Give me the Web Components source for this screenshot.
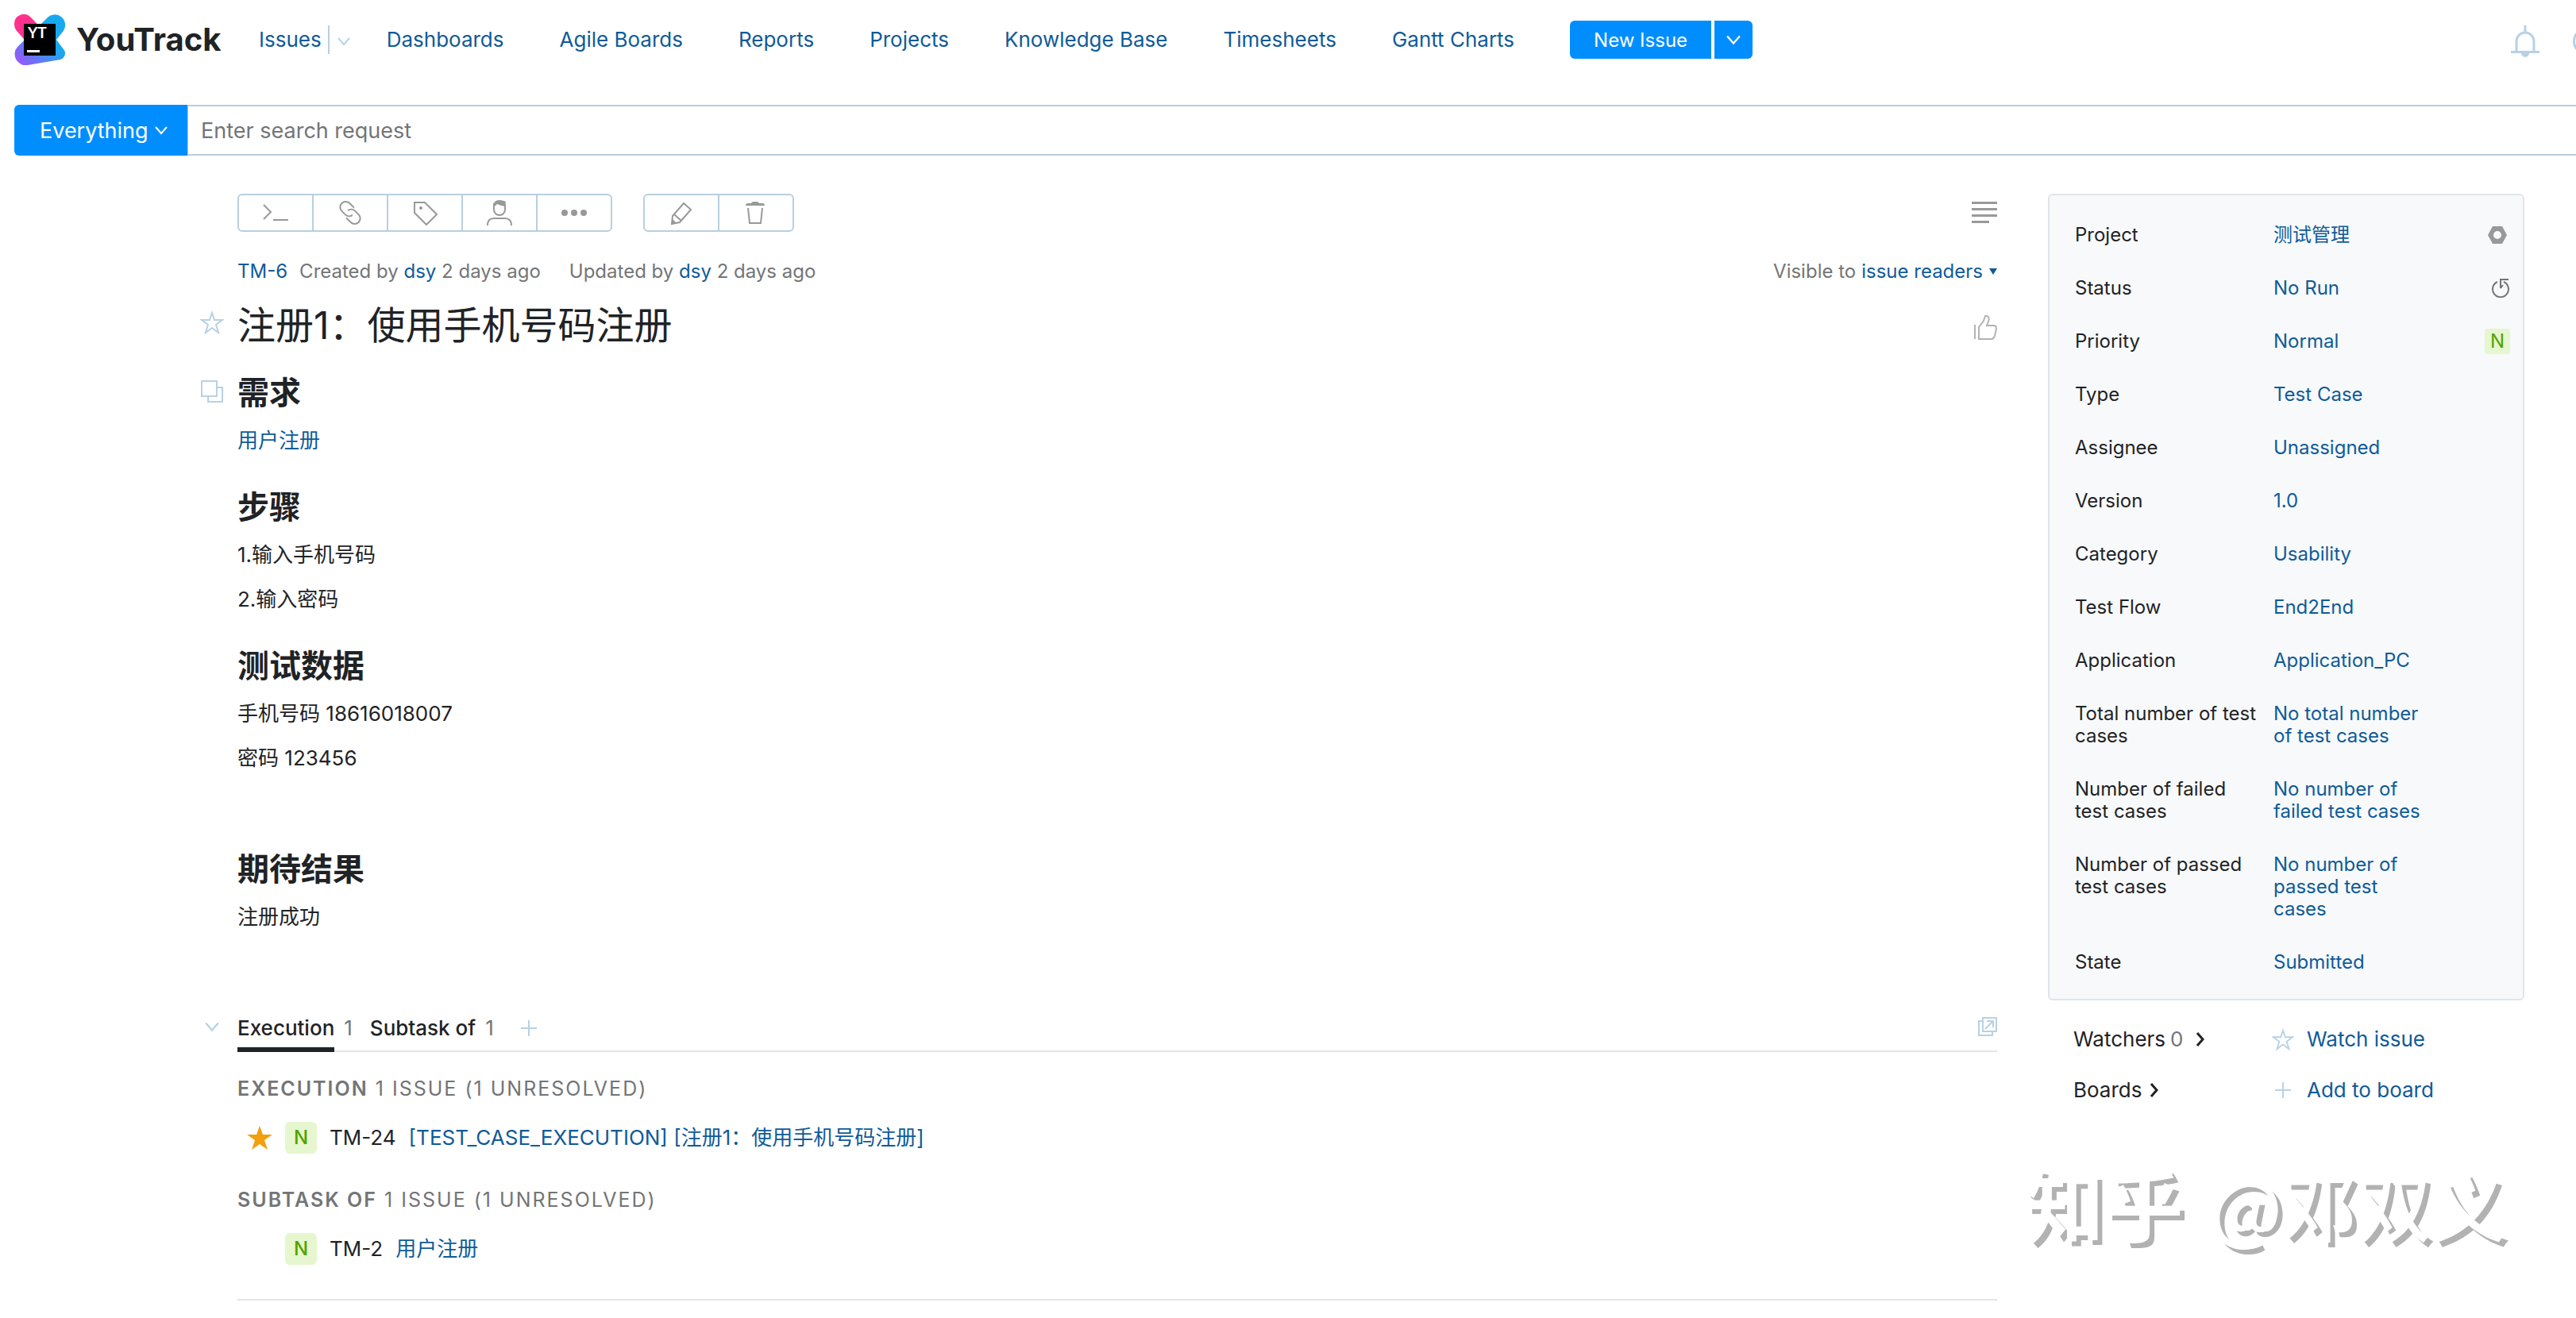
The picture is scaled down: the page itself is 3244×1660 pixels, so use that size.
<!DOCTYPE html>
<html lang="en">
<head>
<meta charset="utf-8">
<title>TM-6 注册1：使用手机号码注册</title>
<style>
  :root {
    --text: #1f2326;
    --secondary: #737577;
    --link: #0f5b99;
    --line: #b8cfdf;
    --border: #dfe5eb;
    --icon: #b8d1e5;
    --icon-grey: #999999;
    --main: #008eff;
    --panel: #f7f9fa;
  }

  html {
    overflow-x: hidden;
  }

  body {
    margin: 0;
    background: #ffffff;
    color: var(--text);
    font-family: Inter, "Noto Sans CJK SC", sans-serif;
    font-size: 26px;
    line-height: 40px;
  }
</style>
</head>
<body>

<yt-app>
  <yt-header slot="header"></yt-header>
  <yt-search slot="search"></yt-search>

  <yt-issue slot="issue">
    <span slot="summary">注册1：使用手机号码注册</span>
    <yt-description slot="description">
      <h2>需求</h2>
      <p><a href="#TM-2">用户注册</a></p>
      <h2>步骤</h2>
      <p>1.输入手机号码</p>
      <p>2.输入密码</p>
      <h2>测试数据</h2>
      <p>手机号码 18616018007</p>
      <p>密码 123456</p>
      <p>&nbsp;</p>
      <h2>期待结果</h2>
      <p>注册成功</p>
    </yt-description>
  </yt-issue>

  <yt-links slot="links">
    <yt-link-group name="Execution">
      <yt-issue-row issue-id="TM-24" starred>[TEST_CASE_EXECUTION] [注册1：使用手机号码注册]</yt-issue-row>
    </yt-link-group>
    <yt-link-group name="Subtask of">
      <yt-issue-row issue-id="TM-2">用户注册</yt-issue-row>
    </yt-link-group>
  </yt-links>

  <yt-sidebar slot="sidebar"></yt-sidebar>
</yt-app>

<yt-watermark><b>知乎</b> @邓双义</yt-watermark>

<script>
/* Icon shapes, keyed by name: [viewBox width, viewBox height, markup] */
const ICONS = {
  "chevron-down": [16, 12, '<path d="M1 2l7 8 7-8" fill="none" stroke="currentColor" stroke-width="2"/>'],
  "chevron-right": [12, 20, '<path d="M2 2l7 8-7 8" fill="none" stroke="currentColor" stroke-width="3"/>'],
  "caret": [10, 8, '<path d="M0 0h10l-5 8z" fill="currentColor"/>'],
  "bell": [36, 40, '<path d="M18 0v8M7 32V20a11 11 0 0 1 22 0v12" fill="none" stroke="currentColor" stroke-width="3"/><path d="M0 32h36v3H0z" fill="currentColor"/><path d="M13 35h10a5 5 0 0 1-10 0z" fill="currentColor"/>'],
  "command": [32, 32, '<path d="M1 6l9 9-9 9M13 25h19" fill="none" stroke="currentColor" stroke-width="2"/>'],
  "link": [32, 32, '<g transform="translate(16 16) rotate(45)" fill="none" stroke="currentColor" stroke-width="2"><path d="M-1-8h-8a7 7 0 0 0 0 14h6a7 7 0 0 0 7-6"/><path d="M1 8h8a7 7 0 0 0 0-14H3a7 7 0 0 0-7 6"/></g>'],
  "tag": [32, 32, '<path d="M3 3h13l15 15-13 13L3 16z" fill="none" stroke="currentColor" stroke-width="2"/><circle cx="11" cy="10" r="2" fill="currentColor"/>'],
  "user": [32, 32, '<g fill="none" stroke="currentColor" stroke-width="2"><path d="M9 4v8c0 4 3 7 7 7s7-3 7-7V5"/><path d="M1 32c0-6 3-9 8-9h14c5 0 8 3 8 9"/></g><path d="M8 8c0-5 3-8 8-8 3 0 6 1 8 2l-1 6c-5-1-8-2-10-3l-3 3z" fill="currentColor"/>'],
  "more": [32, 32, '<g fill="currentColor"><circle cx="4" cy="16" r="4"/><circle cx="16" cy="16" r="4"/><circle cx="28" cy="16" r="4"/></g>'],
  "pencil": [32, 32, '<path d="M5 20L19 4l9 8-14 16-10 2zM7 18l9 8" fill="none" stroke="currentColor" stroke-width="2"/><path d="M5 24l5 5-7 2z" fill="currentColor"/>'],
  "trash": [32, 32, '<path d="M6 10l2 19h14l2-19" fill="none" stroke="currentColor" stroke-width="2"/><path d="M3 7c0-2 1-3 3-3h4c1-2 2-2 5-2s4 0 5 2h4c2 0 3 1 3 3z" fill="currentColor"/>'],
  "text": [32, 28, '<path d="M0 0h32v3H0zM0 8h32v3H0zM0 16h32v3H0zM0 24h22v3H0z" fill="currentColor"/>'],
  "thumb": [30, 32, '<g fill="none" stroke="currentColor" stroke-width="2"><path d="M2 13v18"/><path d="M7 31V16l6-8 2-6c4-1 6 3 4 7l-2 5h9c2 0 3 2 3 4l-2 9c-1 3-2 4-4 4z"/></g>'],
  "star": [30, 30, '<path d="M15 3l3 9h10l-8 6 3 10-8-6-8 6 3-10-8-6h10z" fill="none" stroke="currentColor" stroke-width="2"/>'],
  "star-filled": [32, 30, '<path d="M16 0l4 11h12l-10 7 4 12-10-7-10 7 4-12L0 11h12z" fill="currentColor"/>'],
  "copy": [30, 30, '<path d="M2 2h19v19H2zM21 10h7v18H10v-7" fill="none" stroke="currentColor" stroke-width="2"/>'],
  "plus": [20, 20, '<path d="M10 0v20M0 10h20" fill="none" stroke="currentColor" stroke-width="2"/>'],
  "open": [24, 24, '<path d="M6 1h17v17H6zM6 5H1v18h17v-5M9 15l10-10M11 5h8v8" fill="none" stroke="currentColor" stroke-width="2"/>'],
  "hexagon": [24, 24, '<path fill-rule="evenodd" d="M6 1h12l6 11-6 11H6L0 12zM12 7a5 5 0 1 0 0 10 5 5 0 0 0 0-10z" fill="currentColor"/>'],
  "timer": [24, 24, '<path d="M8 4a10 10 0 1 0 8 0M12 12V1h10M12 12l3-4" fill="none" stroke="#737577" stroke-width="2"/>']
};

/* <yt-icon name="..." width="..">: inline SVG that takes the text colour */
class YtIcon extends HTMLElement {
  constructor() {
    super();
    this.attachShadow({ mode: "open" });
  }

  connectedCallback() {
    const [w, h, body] = ICONS[this.getAttribute("name")];
    const width = Number(this.getAttribute("width")) || w;
    this.shadowRoot.innerHTML = `
      <style>
        :host { display: inline-flex; flex: none; }
        svg { display: block; }
      </style>
      <svg width="${width}" height="${Math.round(width * h / w)}" viewBox="0 0 ${w} ${h}" aria-hidden="true">${body}</svg>
    `;
  }
}

/* Page frame: header and search on top, issue and sidebar side by side */
class YtApp extends HTMLElement {
  constructor() {
    super();
    this.attachShadow({ mode: "open" }).innerHTML = `
      <style>
        :host { display: block; }

        .page {
          display: grid;
          grid-template-columns: minmax(0, 1fr) 600px;
          column-gap: 64px;
          align-items: start;
          padding: 48px 65px 0 252px;
        }
      </style>
      <slot name="header"></slot>
      <slot name="search"></slot>
      <div class="page">
        <main>
          <slot name="issue"></slot>
          <slot name="links"></slot>
        </main>
        <slot name="sidebar"></slot>
      </div>
    `;
  }
}

class YtHeader extends HTMLElement {
  constructor() {
    super();
    this.attachShadow({ mode: "open" });
    this.links = ["Dashboards", "Agile Boards", "Reports", "Projects", "Knowledge Base", "Timesheets", "Gantt Charts"];
  }

  connectedCallback() {
    this.shadowRoot.innerHTML = `
      <style>
        :host { display: block; }

        header {
          display: flex;
          align-items: center;
          height: 100px;
          padding-left: 18px;
          overflow: hidden;
        }

        a { color: var(--link); text-decoration: none; }

        .logo {
          display: flex;
          align-items: center;
          gap: 14px;
          width: 308px;
          color: var(--text);
          font-size: 40px;
          font-weight: 700;
          flex: none;
        }

        nav {
          display: flex;
          align-items: center;
          gap: 70px;
          white-space: nowrap;
        }

        .issues {
          display: flex;
          align-items: center;
          margin-right: -24px;
        }

        .drop {
          display: flex;
          align-items: center;
          height: 36px;
          margin-left: 8px;
          padding: 4px 0 0 10px;
          background: none;
          border: 0;
          border-left: 2px solid var(--line);
          color: var(--icon);
        }

        .create {
          display: flex;
          gap: 4px;
        }

        .create button {
          display: flex;
          align-items: center;
          justify-content: center;
          height: 48px;
          padding: 0;
          border: 0;
          background: var(--main);
          color: #ffffff;
          font: 24px Inter, sans-serif;
        }

        .new { width: 178px; border-radius: 6px 0 0 6px; }
        .create .more { width: 48px; border-radius: 0 6px 6px 0; }

        .tools {
          display: flex;
          align-items: center;
          gap: 42px;
          margin-left: auto;
          margin-right: -30px;
          padding-top: 4px;
          color: var(--icon);
        }

        .tools button {
          display: flex;
          padding: 0;
          border: 0;
          background: none;
          color: inherit;
        }

        .tools .avatar {
          width: 34px;
          height: 34px;
          border: 3px solid var(--line);
          border-radius: 50%;
          box-sizing: border-box;
        }
      </style>
      <header>
        <a class="logo" href="#home">
          <svg width="64" height="64" viewBox="0 0 64 64" aria-hidden="true">
            <defs>
              <linearGradient id="body" x1="0" y1="1" x2="1" y2="0">
                <stop offset="0.1" stop-color="#905cfb"/>
                <stop offset="0.6" stop-color="#18a8ee"/>
              </linearGradient>
            </defs>
            <path d="M0 12A12 12 0 0 1 21 4L46 30 20 40 4 22A14 14 0 0 1 0 12z" fill="#ff318c"/>
            <path d="M41 5A13 13 0 0 1 61 22L53 32 62 44A8 8 0 0 1 58 57L17 64A14 14 0 0 1 4 41z" fill="url(#body)"/>
            <path d="M12 12h40v40H12z" fill="#000000"/>
            <text x="17" y="30" font-family="Lato, sans-serif" font-size="19" font-weight="700" fill="#ffffff">YT</text>
            <path d="M16 45h16v3H16z" fill="#ffffff"/>
          </svg>
          <span>YouTrack</span>
        </a>
        <nav aria-label="Main">
          <div class="issues">
            <a href="#issues">Issues</a>
            <button class="drop" aria-label="Saved searches"><yt-icon name="chevron-down"></yt-icon></button>
          </div>
          ${this.links.map(l => `<a href="#${l.toLowerCase().replace(" ", "-")}">${l}</a>`).join("")}
          <div class="create">
            <button class="new">New Issue</button>
            <button class="more" aria-label="More"><yt-icon name="chevron-down" width="18"></yt-icon></button>
          </div>
        </nav>
        <div class="tools">
          <button aria-label="Notifications"><yt-icon name="bell"></yt-icon></button>
          <button class="avatar" aria-label="Help"></button>
        </div>
      </header>
    `;
  }
}

class YtSearch extends HTMLElement {
  constructor() {
    super();
    this.attachShadow({ mode: "open" }).innerHTML = `
      <style>
        :host { display: block; padding: 32px 0 0 18px; }

        form {
          display: flex;
          height: 64px;
        }

        button {
          display: flex;
          align-items: center;
          gap: 8px;
          width: 218px;
          padding: 0 0 0 32px;
          border: 0;
          border-radius: 6px 0 0 6px;
          background: var(--main);
          color: #ffffff;
          font: 27px Inter, sans-serif;
          flex: none;
        }

        input {
          flex: 1;
          min-width: 0;
          padding: 0 16px;
          border: solid var(--line);
          border-width: 2px 0 2px 1px;
          color: var(--text);
          font: 27px Inter, sans-serif;
          outline: 0;
        }

        input::placeholder { color: var(--secondary); opacity: 1; }
      </style>
      <form role="search">
        <button type="button">Everything <yt-icon name="chevron-down"></yt-icon></button>
        <input type="text" placeholder="Enter search request" aria-label="Search">
      </form>
    `;
  }
}

/* Button strip of the issue; each group is one bordered box */
class YtToolbar extends HTMLElement {
  constructor() {
    super();
    this.attachShadow({ mode: "open" });
    this.groups = [
      [["command", "Command"], ["link", "Link"], ["tag", "Tag"], ["user", "Assign"], ["more", "More"]],
      [["pencil", "Edit"], ["trash", "Delete"]]
    ];
  }

  connectedCallback() {
    this.shadowRoot.innerHTML = `
      <style>
        :host {
          display: flex;
          align-items: center;
          gap: 39px;
        }

        .group {
          display: flex;
          border: 2px solid var(--line);
          border-radius: 6px;
        }

        button {
          display: flex;
          align-items: center;
          justify-content: center;
          width: 94px;
          height: 44px;
          padding: 0;
          border: 0;
          background: none;
          color: var(--icon-grey);
          box-sizing: border-box;
        }

        button:first-child { width: 92px; }
        button + button { border-left: 2px solid var(--line); }

        .plain { width: 32px; margin-left: auto; }
      </style>
      ${this.groups.map(g => `
        <div class="group">
          ${g.map(([icon, label]) => `<button aria-label="${label}"><yt-icon name="${icon}"></yt-icon></button>`).join("")}
        </div>
      `).join("")}
      <button class="plain" aria-label="Toggle view"><yt-icon name="text"></yt-icon></button>
    `;
  }
}

class YtIssue extends HTMLElement {
  constructor() {
    super();
    this.attachShadow({ mode: "open" }).innerHTML = `
      <style>
        :host { display: block; }

        yt-toolbar { margin-left: 47px; }

        a { color: var(--link); text-decoration: none; }

        .meta {
          display: flex;
          margin: 30px 0 0 47px;
          color: var(--secondary);
          font-size: 24px;
        }

        .meta .id { margin-right: 15px; }
        .meta .updated { margin-left: 36px; }

        .visible {
          display: flex;
          align-items: center;
          margin-left: auto;
        }

        .visible button {
          display: flex;
          align-items: center;
          gap: 8px;
          padding: 0 0 0 7px;
          border: 0;
          background: none;
          color: var(--link);
          font: inherit;
        }

        .row {
          display: grid;
          grid-template-columns: 47px minmax(0, 1fr) auto;
          align-items: start;
        }

        .tool {
          display: flex;
          align-items: center;
          height: 56px;
          padding: 0;
          border: 0;
          background: none;
          color: var(--icon);
        }

        .title { margin-top: 16px; }
        .title .like { height: 68px; color: #b2b2b2; }

        h1 {
          margin: 0;
          font-size: 48px;
          font-weight: 400;
          line-height: 64px;
        }

        .body { margin-top: 25px; }
        .body .tool { height: 44px; }
      </style>
      <yt-toolbar></yt-toolbar>
      <div class="meta">
        <a class="id" href="#TM-6">TM-6</a>
        <span>Created by <a href="#dsy">dsy</a> 2 days ago</span>
        <span class="updated">Updated by <a href="#dsy">dsy</a> 2 days ago</span>
        <span class="visible">Visible to <button>issue readers <yt-icon name="caret"></yt-icon></button></span>
      </div>
      <div class="row title">
        <button class="tool" aria-label="Star"><yt-icon name="star"></yt-icon></button>
        <h1><slot name="summary"></slot></h1>
        <button class="tool like" aria-label="Vote"><yt-icon name="thumb"></yt-icon></button>
      </div>
      <div class="row body">
        <button class="tool" aria-label="Copy"><yt-icon name="copy"></yt-icon></button>
        <slot name="description"></slot>
      </div>
    `;
  }
}

/* Rendered description; the texts come in through the slot */
class YtDescription extends HTMLElement {
  constructor() {
    super();
    this.attachShadow({ mode: "open" }).innerHTML = `
      <style>
        :host { display: block; }

        ::slotted(h2) {
          margin: 40px 0 16px;
          font-size: 40px;
          font-weight: 700;
          line-height: 48px;
        }

        ::slotted(h2:first-child) { margin-top: 0; }
        ::slotted(p) { margin: 16px 0 0; }
      </style>
      <slot></slot>
    `;
  }

  connectedCallback() {
    // ::slotted only reaches direct children, so nested links are coloured here
    this.querySelectorAll("a").forEach(a => {
      a.style.color = "var(--link)";
      a.style.textDecoration = "none";
    });
  }
}

class YtBadge extends HTMLElement {
  constructor() {
    super();
    this.attachShadow({ mode: "open" }).innerHTML = `
      <style>
        :host {
          display: inline-flex;
          align-items: center;
          justify-content: center;
          width: 32px;
          height: 32px;
          border-radius: 4px;
          background: #e6f6cf;
          color: #4da400;
          font-size: 24px;
          line-height: 32px;
          flex: none;
        }

        :host([large]) {
          width: 40px;
          height: 40px;
          border-radius: 6px;
          font-weight: 500;
        }
      </style>
      <slot></slot>
    `;
  }
}

class YtIssueRow extends HTMLElement {
  constructor() {
    super();
    this.attachShadow({ mode: "open" });
  }

  connectedCallback() {
    const id = this.getAttribute("issue-id");
    this.shadowRoot.innerHTML = `
      <style>
        :host {
          display: flex;
          align-items: center;
          padding-left: 12px;
        }

        .star {
          display: flex;
          width: 48px;
          padding: 0;
          border: 0;
          background: none;
          color: #f2a00e;
        }

        .id { margin: 0 16px; color: var(--text); text-decoration: none; }
        .summary { color: var(--link); text-decoration: none; }
      </style>
      <button class="star" aria-label="Star">${this.hasAttribute("starred") ? '<yt-icon name="star-filled"></yt-icon>' : ""}</button>
      <yt-badge large>N</yt-badge>
      <a class="id" href="#${id}">${id}</a>
      <a class="summary" href="#${id}"><slot></slot></a>
    `;
  }
}

class YtLinkGroup extends HTMLElement {
  constructor() {
    super();
    this.attachShadow({ mode: "open" });
  }

  connectedCallback() {
    this.shadowRoot.innerHTML = `
      <style>
        :host { display: block; }

        h3 {
          margin: 0 0 22px;
          color: var(--secondary);
          font-size: 25px;
          font-weight: 400;
          letter-spacing: 2px;
          line-height: 40px;
          text-transform: uppercase;
        }

        b { font-weight: 600; }
      </style>
      <h3><b>${this.getAttribute("name")}</b> 1 issue (1 unresolved)</h3>
      <slot></slot>
    `;
  }
}

class YtLinks extends HTMLElement {
  constructor() {
    super();
    this.attachShadow({ mode: "open" }).innerHTML = `
      <style>
        :host {
          display: block;
          margin-top: 100px;
        }

        .head {
          display: flex;
          align-items: flex-start;
        }

        button {
          display: flex;
          padding: 0;
          border: 0;
          background: none;
          color: var(--text);
          font: inherit;
        }

        .fold {
          width: 30px;
          height: 36px;
          margin-right: 17px;
          align-items: center;
          justify-content: center;
          color: var(--icon);
        }

        .tabs {
          display: flex;
          flex: 1;
          gap: 22px;
          border-bottom: 2px solid var(--border);
        }

        .tab {
          display: flex;
          gap: 12px;
          height: 48px;
          color: var(--secondary);
        }

        .tab button {
          height: 50px;
          box-sizing: border-box;
          font-weight: 500;
        }

        .tab .active { border-bottom: 6px solid var(--text); }

        .add, .open { align-items: center; color: var(--icon); }
        .add { height: 40px; margin-left: 12px; }
        .open { height: 36px; margin-left: auto; }

        .groups {
          display: flex;
          flex-direction: column;
          gap: 38px;
          margin-left: 47px;
          padding: 26px 0 43px;
          border-bottom: 2px solid var(--border);
        }
      </style>
      <div class="head">
        <button class="fold" aria-label="Collapse"><yt-icon name="chevron-down" width="18"></yt-icon></button>
        <div class="tabs">
          <div class="tab"><button class="active">Execution</button><span>1</span></div>
          <div class="tab"><button>Subtask of</button><span>1</span></div>
          <button class="add" aria-label="Add link"><yt-icon name="plus"></yt-icon></button>
          <button class="open" aria-label="Open as list"><yt-icon name="open"></yt-icon></button>
        </div>
      </div>
      <div class="groups"><slot></slot></div>
    `;
  }
}

/* One name/value pair of the field panel, with an optional mark in the slot */
class YtField extends HTMLElement {
  constructor() {
    super();
    this.attachShadow({ mode: "open" });
  }

  connectedCallback() {
    this.shadowRoot.innerHTML = `
      <style>
        :host {
          display: grid;
          grid-template-columns: 234px 192px 1fr;
          column-gap: 16px;
          align-items: start;
          line-height: 28px;
        }

        button {
          padding: 0;
          border: 0;
          background: none;
          color: var(--link);
          font: inherit;
          text-align: left;
        }

        .mark {
          display: flex;
          align-items: center;
          justify-content: flex-end;
          height: 28px;
          color: var(--icon-grey);
        }
      </style>
      <span id="name">${this.getAttribute("name")}</span>
      <button aria-describedby="name">${this.getAttribute("value")}</button>
      <span class="mark"><slot></slot></span>
    `;
  }
}

class YtSidebar extends HTMLElement {
  constructor() {
    super();
    this.attachShadow({ mode: "open" });
    this.fields = [
      ["Project", "测试管理", '<yt-icon class="inset" name="hexagon"></yt-icon>'],
      ["Status", "No Run", '<yt-icon name="timer"></yt-icon>'],
      ["Priority", "Normal", "<yt-badge>N</yt-badge>"],
      ["Type", "Test Case"],
      ["Assignee", "Unassigned"],
      ["Version", "1.0"],
      ["Category", "Usability"],
      ["Test Flow", "End2End"],
      ["Application", "Application_PC"],
      ["Total number of test cases", "No total number of test cases"],
      ["Number of failed test cases", "No number of failed test cases"],
      ["Number of passed test cases", "No number of passed test cases"],
      ["State", "Submitted"]
    ];
  }

  connectedCallback() {
    this.shadowRoot.innerHTML = `
      <style>
        :host { display: block; }

        .panel {
          display: flex;
          flex-direction: column;
          gap: 39px;
          padding: 36px 16px 32px 32px;
          border: 2px solid var(--border);
          border-radius: 6px;
          background: var(--panel);
          font-size: 24px;
        }

        .inset { margin-right: 4px; }

        .extra {
          display: grid;
          grid-template-columns: 250px 1fr;
          row-gap: 24px;
          padding: 29px 0 0 32px;
        }

        .extra button {
          display: flex;
          align-items: center;
          padding: 0;
          border: 0;
          background: none;
          color: var(--text);
          font: inherit;
        }

        .count { margin: 0 16px 0 6px; color: var(--secondary); }
        .boards { margin-right: 10px; }

        .extra .action { color: var(--link); }

        .action .lead {
          display: flex;
          justify-content: center;
          width: 28px;
          margin-right: 16px;
          color: var(--icon);
        }
      </style>
      <div class="panel">
        ${this.fields.map(([name, value, mark]) => `<yt-field name="${name}" value="${value}">${mark || ""}</yt-field>`).join("")}
      </div>
      <div class="extra">
        <button>Watchers <span class="count">0</span><yt-icon name="chevron-right"></yt-icon></button>
        <button class="action"><span class="lead"><yt-icon name="star" width="28"></yt-icon></span>Watch issue</button>
        <button><span class="boards">Boards</span><yt-icon name="chevron-right"></yt-icon></button>
        <button class="action"><span class="lead"><yt-icon name="plus"></yt-icon></span>Add to board</button>
      </div>
    `;
  }
}

/* Lies over the lower right corner of the page */
class YtWatermark extends HTMLElement {
  constructor() {
    super();
    this.attachShadow({ mode: "open" }).innerHTML = `
      <style>
        :host {
          position: fixed;
          right: 88px;
          bottom: 80px;
          color: #ffffff;
          font: 500 94px "Noto Sans CJK SC", sans-serif;
          line-height: 128px;
          text-shadow: 6px 6px 0 #b2b2b2;
          white-space: nowrap;
          pointer-events: none;
        }

        ::slotted(b) {
          margin-right: 12px;
          font-size: 100px;
        }
      </style>
      <slot></slot>
    `;
  }
}

customElements.define("yt-icon", YtIcon);
customElements.define("yt-badge", YtBadge);
customElements.define("yt-app", YtApp);
customElements.define("yt-header", YtHeader);
customElements.define("yt-search", YtSearch);
customElements.define("yt-toolbar", YtToolbar);
customElements.define("yt-issue", YtIssue);
customElements.define("yt-description", YtDescription);
customElements.define("yt-issue-row", YtIssueRow);
customElements.define("yt-link-group", YtLinkGroup);
customElements.define("yt-links", YtLinks);
customElements.define("yt-field", YtField);
customElements.define("yt-sidebar", YtSidebar);
customElements.define("yt-watermark", YtWatermark);
</script>
</body>
</html>
